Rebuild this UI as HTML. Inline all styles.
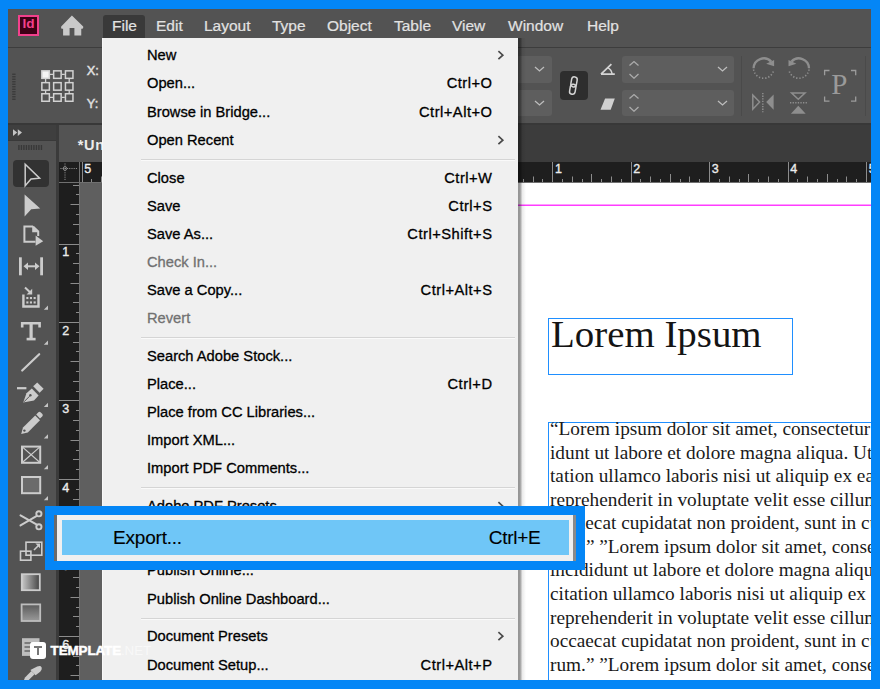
<!DOCTYPE html>
<html><head><meta charset="utf-8"><style>
html,body{margin:0;padding:0;}
body{width:880px;height:689px;position:relative;overflow:hidden;background:#0486f6;font-family:"Liberation Sans",sans-serif;}
</style></head><body>
<div style="position:absolute;left:8px;top:9px;width:863px;height:671px;background:#535353"></div>
<div style="position:absolute;left:8px;top:47px;width:863px;height:1px;background:#3d3d3d"></div>
<div style="position:absolute;left:18px;top:15px;width:17px;height:16.5px;border:2px solid #f2408c;background:#3d0016;"></div>
<div style="position:absolute;left:22.6px;top:17.29px;font:13.6px/13.6px 'Liberation Sans', sans-serif;color:#f2408c;white-space:nowrap;font-weight:bold;letter-spacing:-0.2px">Id</div>
<svg style="position:absolute;left:60px;top:14px;" width="25" height="23" viewBox="0 0 25 23"><path d="M11.9 1.4 L1.2 12.4 Q0.6 14.75 2 14.75 L3.1 14.75 V21.6 H9.6 V14 H14.4 V21.6 H21.25 V14.75 H22.4 Q23.6 14.75 23.2 12.6 Z" fill="#c9c9c9"/></svg>
<div style="position:absolute;left:103px;top:15px;width:42px;height:23px;background:#393939;border-radius:3px 3px 0 0"></div>
<div style="position:absolute;left:112px;top:18.48px;font:15.5px/15.5px 'Liberation Sans', sans-serif;color:#e2e2e2;white-space:nowrap;-webkit-text-stroke:0.2px #e2e2e2">File</div>
<div style="position:absolute;left:156px;top:18.48px;font:15.5px/15.5px 'Liberation Sans', sans-serif;color:#e2e2e2;white-space:nowrap;-webkit-text-stroke:0.2px #e2e2e2">Edit</div>
<div style="position:absolute;left:204px;top:18.48px;font:15.5px/15.5px 'Liberation Sans', sans-serif;color:#e2e2e2;white-space:nowrap;-webkit-text-stroke:0.2px #e2e2e2">Layout</div>
<div style="position:absolute;left:272px;top:18.48px;font:15.5px/15.5px 'Liberation Sans', sans-serif;color:#e2e2e2;white-space:nowrap;-webkit-text-stroke:0.2px #e2e2e2">Type</div>
<div style="position:absolute;left:327px;top:18.48px;font:15.5px/15.5px 'Liberation Sans', sans-serif;color:#e2e2e2;white-space:nowrap;-webkit-text-stroke:0.2px #e2e2e2">Object</div>
<div style="position:absolute;left:394px;top:18.48px;font:15.5px/15.5px 'Liberation Sans', sans-serif;color:#e2e2e2;white-space:nowrap;-webkit-text-stroke:0.2px #e2e2e2">Table</div>
<div style="position:absolute;left:452px;top:18.48px;font:15.5px/15.5px 'Liberation Sans', sans-serif;color:#e2e2e2;white-space:nowrap;-webkit-text-stroke:0.2px #e2e2e2">View</div>
<div style="position:absolute;left:508px;top:18.48px;font:15.5px/15.5px 'Liberation Sans', sans-serif;color:#e2e2e2;white-space:nowrap;-webkit-text-stroke:0.2px #e2e2e2">Window</div>
<div style="position:absolute;left:587px;top:18.48px;font:15.5px/15.5px 'Liberation Sans', sans-serif;color:#e2e2e2;white-space:nowrap;-webkit-text-stroke:0.2px #e2e2e2">Help</div>
<div style="position:absolute;left:8px;top:123px;width:863px;height:2px;background:#383838"></div>
<svg style="position:absolute;left:0px;top:0px;pointer-events:none" width="880" height="689" viewBox="0 0 880 689"><rect x="12.2" y="73.6" width="3.4" height="1.3" fill="#3a3a3a"/><rect x="12.2" y="76.1" width="3.4" height="1.3" fill="#3a3a3a"/><rect x="12.2" y="78.6" width="3.4" height="1.3" fill="#3a3a3a"/><rect x="12.2" y="81.1" width="3.4" height="1.3" fill="#3a3a3a"/><rect x="12.2" y="83.6" width="3.4" height="1.3" fill="#3a3a3a"/><rect x="12.2" y="86.1" width="3.4" height="1.3" fill="#3a3a3a"/><rect x="12.2" y="88.6" width="3.4" height="1.3" fill="#3a3a3a"/><rect x="12.2" y="91.1" width="3.4" height="1.3" fill="#3a3a3a"/><rect x="12.2" y="93.6" width="3.4" height="1.3" fill="#3a3a3a"/><rect x="12.2" y="96.1" width="3.4" height="1.3" fill="#3a3a3a"/><rect x="12.2" y="98.6" width="3.4" height="1.3" fill="#3a3a3a"/></svg>
<svg style="position:absolute;left:0px;top:0px;pointer-events:none" width="880" height="689" viewBox="0 0 880 689"><rect x="41.85" y="70.85" width="7.5" height="7.5" fill="#f4f4f4" stroke="#d2d2d2" stroke-width="1.5"/><rect x="41.85" y="82.65" width="7.5" height="7.5" fill="none" stroke="#d2d2d2" stroke-width="1.5"/><rect x="41.85" y="93.75" width="7.5" height="7.5" fill="none" stroke="#d2d2d2" stroke-width="1.5"/><rect x="53.65" y="70.85" width="7.5" height="7.5" fill="none" stroke="#d2d2d2" stroke-width="1.5"/><rect x="53.65" y="82.65" width="7.5" height="7.5" fill="none" stroke="#d2d2d2" stroke-width="1.5"/><rect x="53.65" y="93.75" width="7.5" height="7.5" fill="none" stroke="#d2d2d2" stroke-width="1.5"/><rect x="65.45" y="70.85" width="7.5" height="7.5" fill="none" stroke="#d2d2d2" stroke-width="1.5"/><rect x="65.45" y="82.65" width="7.5" height="7.5" fill="none" stroke="#d2d2d2" stroke-width="1.5"/><rect x="65.45" y="93.75" width="7.5" height="7.5" fill="none" stroke="#d2d2d2" stroke-width="1.5"/><path d="M50 74.3H53M61.8 74.3H64.8M50 97.3H53M61.8 97.3H64.8M45.6 78.4V82M45.6 90.2V93M69.2 78.4V82M69.2 90.2V93" stroke="#d2d2d2" stroke-width="1.3"/></svg>
<div style="position:absolute;left:86.8px;top:65.36px;font:12.8px/12.8px 'Liberation Sans', sans-serif;color:#e0e0e0;white-space:nowrap;-webkit-text-stroke:0.45px #e0e0e0">X:</div>
<div style="position:absolute;left:86.8px;top:98.36px;font:12.8px/12.8px 'Liberation Sans', sans-serif;color:#e0e0e0;white-space:nowrap;-webkit-text-stroke:0.45px #e0e0e0">Y:</div>
<div style="position:absolute;left:505px;top:56px;width:47px;height:27px;background:#5e5e5e;border-radius:3px"></div>
<div style="position:absolute;left:505px;top:90px;width:47px;height:26px;background:#5e5e5e;border-radius:3px"></div>
<svg style="position:absolute;left:534px;top:66px;" width="11" height="7" viewBox="0 0 11 7"><path d="M1 1 L5.5 5 L10 1" fill="none" stroke="#bdbdbd" stroke-width="1.3"/></svg>
<svg style="position:absolute;left:534px;top:100px;" width="11" height="7" viewBox="0 0 11 7"><path d="M1 1 L5.5 5 L10 1" fill="none" stroke="#bdbdbd" stroke-width="1.3"/></svg>
<div style="position:absolute;left:560px;top:71px;width:28px;height:29px;background:#2e2e2e;border-radius:4px"></div>
<svg style="position:absolute;left:0px;top:0px;pointer-events:none" width="880" height="689" viewBox="0 0 880 689"><g transform="rotate(10 573.4 85.5)"><rect x="570.6" y="76.8" width="5.6" height="10.2" rx="2.8" fill="none" stroke="#d4d4d4" stroke-width="1.5"/><rect x="570.6" y="84.2" width="5.6" height="10.2" rx="2.8" fill="none" stroke="#d4d4d4" stroke-width="1.5"/></g></svg>
<svg style="position:absolute;left:0px;top:0px;pointer-events:none" width="880" height="689" viewBox="0 0 880 689"><path d="M601 74.2 H614.8 M601 74.2 L611.4 64.2" fill="none" stroke="#d4d4d4" stroke-width="1.7"/><path d="M607.8 67.6 Q611.8 70 612 74" fill="none" stroke="#d4d4d4" stroke-width="1.5"/><path d="M605.1 98.5 H614.8 L610.7 109.7 H600.5 Z" fill="#d0d0d0"/></svg>
<div style="position:absolute;left:622px;top:56px;width:112px;height:27px;background:#5e5e5e;border-radius:3px"></div>
<div style="position:absolute;left:622px;top:90px;width:112px;height:26px;background:#5e5e5e;border-radius:3px"></div>
<svg style="position:absolute;left:628.6px;top:60.6px;" width="10" height="18" viewBox="0 0 10 18"><path d="M0.5 4.6 L5 0.6 L9.5 4.6 M0.5 13 L5 17.2 L9.5 13" fill="none" stroke="#ababab" stroke-width="1.3"/></svg>
<svg style="position:absolute;left:628.6px;top:93.9px;" width="10" height="18" viewBox="0 0 10 18"><path d="M0.5 4.6 L5 0.6 L9.5 4.6 M0.5 13 L5 17.2 L9.5 13" fill="none" stroke="#ababab" stroke-width="1.3"/></svg>
<svg style="position:absolute;left:717px;top:66px;" width="11" height="7" viewBox="0 0 11 7"><path d="M1 1 L5.5 5 L10 1" fill="none" stroke="#bdbdbd" stroke-width="1.3"/></svg>
<svg style="position:absolute;left:717px;top:100px;" width="11" height="7" viewBox="0 0 11 7"><path d="M1 1 L5.5 5 L10 1" fill="none" stroke="#bdbdbd" stroke-width="1.3"/></svg>
<div style="position:absolute;left:741px;top:56px;width:1px;height:60px;background:#4a4a4a"></div>
<svg style="position:absolute;left:745px;top:52px;" width="70" height="68" viewBox="0 0 70 68"><path d="M0 0" /><path d="M8.6 16.3 A10.2 10.2 0 0 1 26.2 9.6" fill="none" stroke="#8e8e8e" stroke-width="2.3"/><path d="M8.6 17.5 A10.2 10.2 0 0 0 28.6 18.5" fill="none" stroke="#8e8e8e" stroke-width="1.6" stroke-dasharray="1.3 1.9"/><path d="M21.2 11.8 L29.1 7.9 L29.1 14.3 Z" fill="#8e8e8e"/><g transform="translate(72.6,0) scale(-1,1)"><path d="M0 0" /><path d="M8.6 16.3 A10.2 10.2 0 0 1 26.2 9.6" fill="none" stroke="#8e8e8e" stroke-width="2.3"/><path d="M8.6 17.5 A10.2 10.2 0 0 0 28.6 18.5" fill="none" stroke="#8e8e8e" stroke-width="1.6" stroke-dasharray="1.3 1.9"/><path d="M21.2 11.8 L29.1 7.9 L29.1 14.3 Z" fill="#8e8e8e"/></g></svg>
<svg style="position:absolute;left:0px;top:0px;pointer-events:none" width="880" height="689" viewBox="0 0 880 689"><path d="M752.8 95 L759.6 102.1 L752.8 109.2 Z" fill="none" stroke="#8e8e8e" stroke-width="1.5"/><path d="M773.6 94.4 L766.2 102.1 L773.6 109.8 Z" fill="#8e8e8e"/><path d="M762.8 93 V112.2" stroke="#8e8e8e" stroke-width="1.5" stroke-dasharray="1.3 1.3"/><path d="M791.6 93 L805 93 L798.3 99.2 Z" fill="none" stroke="#8e8e8e" stroke-width="1.5"/><path d="M790.9 113.7 L805.7 113.7 L798.3 105.8 Z" fill="#8e8e8e"/><path d="M790 102.8 H808" stroke="#8e8e8e" stroke-width="1.5" stroke-dasharray="1.3 1.3"/></svg>
<svg style="position:absolute;left:0px;top:0px;pointer-events:none" width="880" height="689" viewBox="0 0 880 689"><path d="M824.6 75.2 V70.5 H829.5 M851 70.5 H855.7 V75.2 M855.7 96.4 V101.1 H851 M829.5 101.1 H824.6 V96.4" fill="none" stroke="#9c9c9c" stroke-width="1.3"/></svg>
<div style="position:absolute;left:831.2px;top:69.91px;font:29px/29px 'Liberation Serif', serif;color:#9a9a9a;white-space:nowrap;">P</div>
<div style="position:absolute;left:865px;top:56px;width:1px;height:60px;background:#4a4a4a"></div>
<div style="position:absolute;left:56px;top:125px;width:815px;height:37px;background:#3c3c3c"></div>
<div style="position:absolute;left:59px;top:125px;width:43px;height:37px;background:#535353"></div>
<div style="position:absolute;left:77.8px;top:137.74px;font:14.6px/14.6px 'Liberation Sans', sans-serif;color:#ececec;white-space:nowrap;font-weight:bold;letter-spacing:0.6px">*Un</div>
<div style="position:absolute;left:8px;top:125px;width:48px;height:15px;background:#3f3f3f"></div>
<svg style="position:absolute;left:12px;top:128px;" width="12" height="9" viewBox="0 0 12 9"><path d="M1 1.2 L5.2 4.6 L1 8Z M5.8 1.2 L10 4.6 L5.8 8Z" fill="#c4c4c4"/></svg>
<div style="position:absolute;left:8px;top:140px;width:48px;height:1px;background:#393939"></div>
<svg style="position:absolute;left:0px;top:0px;pointer-events:none" width="880" height="689" viewBox="0 0 880 689"><rect x="18.2" y="145" width="1.4" height="5" fill="#383838"/><rect x="20.7" y="145" width="1.4" height="5" fill="#383838"/><rect x="23.2" y="145" width="1.4" height="5" fill="#383838"/><rect x="25.7" y="145" width="1.4" height="5" fill="#383838"/><rect x="28.2" y="145" width="1.4" height="5" fill="#383838"/><rect x="30.7" y="145" width="1.4" height="5" fill="#383838"/><rect x="33.2" y="145" width="1.4" height="5" fill="#383838"/><rect x="35.7" y="145" width="1.4" height="5" fill="#383838"/><rect x="38.2" y="145" width="1.4" height="5" fill="#383838"/><rect x="40.7" y="145" width="1.4" height="5" fill="#383838"/></svg>
<div style="position:absolute;left:56px;top:125px;width:3px;height:555px;background:#3b3b3b"></div>
<div style="position:absolute;left:59px;top:162px;width:812px;height:20px;background:#1e1e1e"></div>
<div style="position:absolute;left:59px;top:182px;width:20px;height:498px;background:#1e1e1e"></div>
<div style="position:absolute;left:59px;top:182px;width:812px;height:1px;background:#707070"></div>
<div style="position:absolute;left:79px;top:162px;width:1px;height:518px;background:#707070"></div>
<div style="position:absolute;left:80px;top:183px;width:22px;height:497px;background:#5f5f5f"></div>
<div style="position:absolute;left:102px;top:183px;width:769px;height:497px;background:#ffffff"></div>
<svg style="position:absolute;left:0px;top:0px;pointer-events:none" width="880" height="689" viewBox="0 0 880 689"><path d="M82.5 162V182" stroke="#8c8c8c" stroke-width="1"/><path d="M91.5 179V182" stroke="#8c8c8c" stroke-width="1"/><path d="M101.5 176.5V182" stroke="#8c8c8c" stroke-width="1"/><path d="M111.5 179V182" stroke="#8c8c8c" stroke-width="1"/><path d="M121.5 174V182" stroke="#8c8c8c" stroke-width="1"/><path d="M131.5 179V182" stroke="#8c8c8c" stroke-width="1"/><path d="M140.5 176.5V182" stroke="#8c8c8c" stroke-width="1"/><path d="M150.5 179V182" stroke="#8c8c8c" stroke-width="1"/><path d="M160.5 162V182" stroke="#8c8c8c" stroke-width="1"/><path d="M170.5 179V182" stroke="#8c8c8c" stroke-width="1"/><path d="M180.5 176.5V182" stroke="#8c8c8c" stroke-width="1"/><path d="M189.5 179V182" stroke="#8c8c8c" stroke-width="1"/><path d="M199.5 174V182" stroke="#8c8c8c" stroke-width="1"/><path d="M209.5 179V182" stroke="#8c8c8c" stroke-width="1"/><path d="M219.5 176.5V182" stroke="#8c8c8c" stroke-width="1"/><path d="M229.5 179V182" stroke="#8c8c8c" stroke-width="1"/><path d="M238.5 162V182" stroke="#8c8c8c" stroke-width="1"/><path d="M248.5 179V182" stroke="#8c8c8c" stroke-width="1"/><path d="M258.5 176.5V182" stroke="#8c8c8c" stroke-width="1"/><path d="M268.5 179V182" stroke="#8c8c8c" stroke-width="1"/><path d="M278.5 174V182" stroke="#8c8c8c" stroke-width="1"/><path d="M287.5 179V182" stroke="#8c8c8c" stroke-width="1"/><path d="M297.5 176.5V182" stroke="#8c8c8c" stroke-width="1"/><path d="M307.5 179V182" stroke="#8c8c8c" stroke-width="1"/><path d="M317.5 162V182" stroke="#8c8c8c" stroke-width="1"/><path d="M327.5 179V182" stroke="#8c8c8c" stroke-width="1"/><path d="M336.5 176.5V182" stroke="#8c8c8c" stroke-width="1"/><path d="M346.5 179V182" stroke="#8c8c8c" stroke-width="1"/><path d="M356.5 174V182" stroke="#8c8c8c" stroke-width="1"/><path d="M366.5 179V182" stroke="#8c8c8c" stroke-width="1"/><path d="M376.5 176.5V182" stroke="#8c8c8c" stroke-width="1"/><path d="M385.5 179V182" stroke="#8c8c8c" stroke-width="1"/><path d="M395.5 162V182" stroke="#8c8c8c" stroke-width="1"/><path d="M405.5 179V182" stroke="#8c8c8c" stroke-width="1"/><path d="M415.5 176.5V182" stroke="#8c8c8c" stroke-width="1"/><path d="M425.5 179V182" stroke="#8c8c8c" stroke-width="1"/><path d="M435.5 174V182" stroke="#8c8c8c" stroke-width="1"/><path d="M444.5 179V182" stroke="#8c8c8c" stroke-width="1"/><path d="M454.5 176.5V182" stroke="#8c8c8c" stroke-width="1"/><path d="M464.5 179V182" stroke="#8c8c8c" stroke-width="1"/><path d="M474.5 162V182" stroke="#8c8c8c" stroke-width="1"/><path d="M484.5 179V182" stroke="#8c8c8c" stroke-width="1"/><path d="M493.5 176.5V182" stroke="#8c8c8c" stroke-width="1"/><path d="M503.5 179V182" stroke="#8c8c8c" stroke-width="1"/><path d="M513.5 174V182" stroke="#8c8c8c" stroke-width="1"/><path d="M523.5 179V182" stroke="#8c8c8c" stroke-width="1"/><path d="M533.5 176.5V182" stroke="#8c8c8c" stroke-width="1"/><path d="M542.5 179V182" stroke="#8c8c8c" stroke-width="1"/><path d="M552.5 162V182" stroke="#8c8c8c" stroke-width="1"/><path d="M562.5 179V182" stroke="#8c8c8c" stroke-width="1"/><path d="M572.5 176.5V182" stroke="#8c8c8c" stroke-width="1"/><path d="M582.5 179V182" stroke="#8c8c8c" stroke-width="1"/><path d="M591.5 174V182" stroke="#8c8c8c" stroke-width="1"/><path d="M601.5 179V182" stroke="#8c8c8c" stroke-width="1"/><path d="M611.5 176.5V182" stroke="#8c8c8c" stroke-width="1"/><path d="M621.5 179V182" stroke="#8c8c8c" stroke-width="1"/><path d="M631.5 162V182" stroke="#8c8c8c" stroke-width="1"/><path d="M640.5 179V182" stroke="#8c8c8c" stroke-width="1"/><path d="M650.5 176.5V182" stroke="#8c8c8c" stroke-width="1"/><path d="M660.5 179V182" stroke="#8c8c8c" stroke-width="1"/><path d="M670.5 174V182" stroke="#8c8c8c" stroke-width="1"/><path d="M680.5 179V182" stroke="#8c8c8c" stroke-width="1"/><path d="M689.5 176.5V182" stroke="#8c8c8c" stroke-width="1"/><path d="M699.5 179V182" stroke="#8c8c8c" stroke-width="1"/><path d="M709.5 162V182" stroke="#8c8c8c" stroke-width="1"/><path d="M719.5 179V182" stroke="#8c8c8c" stroke-width="1"/><path d="M729.5 176.5V182" stroke="#8c8c8c" stroke-width="1"/><path d="M739.5 179V182" stroke="#8c8c8c" stroke-width="1"/><path d="M748.5 174V182" stroke="#8c8c8c" stroke-width="1"/><path d="M758.5 179V182" stroke="#8c8c8c" stroke-width="1"/><path d="M768.5 176.5V182" stroke="#8c8c8c" stroke-width="1"/><path d="M778.5 179V182" stroke="#8c8c8c" stroke-width="1"/><path d="M788.5 162V182" stroke="#8c8c8c" stroke-width="1"/><path d="M797.5 179V182" stroke="#8c8c8c" stroke-width="1"/><path d="M807.5 176.5V182" stroke="#8c8c8c" stroke-width="1"/><path d="M817.5 179V182" stroke="#8c8c8c" stroke-width="1"/><path d="M827.5 174V182" stroke="#8c8c8c" stroke-width="1"/><path d="M837.5 179V182" stroke="#8c8c8c" stroke-width="1"/><path d="M846.5 176.5V182" stroke="#8c8c8c" stroke-width="1"/><path d="M856.5 179V182" stroke="#8c8c8c" stroke-width="1"/><path d="M866.5 162V182" stroke="#8c8c8c" stroke-width="1"/></svg>
<div style="position:absolute;left:84.20000000000006px;top:163.42px;font:12.5px/12.5px 'Liberation Sans', sans-serif;color:#ececec;white-space:nowrap;-webkit-text-stroke:0.35px #ececec">5</div>
<div style="position:absolute;left:554.9000000000001px;top:163.42px;font:12.5px/12.5px 'Liberation Sans', sans-serif;color:#ececec;white-space:nowrap;-webkit-text-stroke:0.35px #ececec">1</div>
<div style="position:absolute;left:633.3500000000001px;top:163.42px;font:12.5px/12.5px 'Liberation Sans', sans-serif;color:#ececec;white-space:nowrap;-webkit-text-stroke:0.35px #ececec">2</div>
<div style="position:absolute;left:711.8000000000002px;top:163.42px;font:12.5px/12.5px 'Liberation Sans', sans-serif;color:#ececec;white-space:nowrap;-webkit-text-stroke:0.35px #ececec">3</div>
<div style="position:absolute;left:790.2500000000001px;top:163.42px;font:12.5px/12.5px 'Liberation Sans', sans-serif;color:#ececec;white-space:nowrap;-webkit-text-stroke:0.35px #ececec">4</div>
<div style="position:absolute;left:868.7px;top:163.42px;font:12.5px/12.5px 'Liberation Sans', sans-serif;color:#ececec;white-space:nowrap;-webkit-text-stroke:0.35px #ececec">5</div>
<svg style="position:absolute;left:0px;top:0px;pointer-events:none" width="880" height="689" viewBox="0 0 880 689"><path d="M73 185.5H79" stroke="#8c8c8c" stroke-width="1"/><path d="M76 194.5H79" stroke="#8c8c8c" stroke-width="1"/><path d="M70.5 204.5H79" stroke="#8c8c8c" stroke-width="1"/><path d="M76 214.5H79" stroke="#8c8c8c" stroke-width="1"/><path d="M73 224.5H79" stroke="#8c8c8c" stroke-width="1"/><path d="M76 234.5H79" stroke="#8c8c8c" stroke-width="1"/><path d="M59 244.5H79" stroke="#8c8c8c" stroke-width="1"/><path d="M76 253.5H79" stroke="#8c8c8c" stroke-width="1"/><path d="M73 263.5H79" stroke="#8c8c8c" stroke-width="1"/><path d="M76 273.5H79" stroke="#8c8c8c" stroke-width="1"/><path d="M70.5 283.5H79" stroke="#8c8c8c" stroke-width="1"/><path d="M76 293.5H79" stroke="#8c8c8c" stroke-width="1"/><path d="M73 302.5H79" stroke="#8c8c8c" stroke-width="1"/><path d="M76 312.5H79" stroke="#8c8c8c" stroke-width="1"/><path d="M59 322.5H79" stroke="#8c8c8c" stroke-width="1"/><path d="M76 332.5H79" stroke="#8c8c8c" stroke-width="1"/><path d="M73 342.5H79" stroke="#8c8c8c" stroke-width="1"/><path d="M76 351.5H79" stroke="#8c8c8c" stroke-width="1"/><path d="M70.5 361.5H79" stroke="#8c8c8c" stroke-width="1"/><path d="M76 371.5H79" stroke="#8c8c8c" stroke-width="1"/><path d="M73 381.5H79" stroke="#8c8c8c" stroke-width="1"/><path d="M76 391.5H79" stroke="#8c8c8c" stroke-width="1"/><path d="M59 400.5H79" stroke="#8c8c8c" stroke-width="1"/><path d="M76 410.5H79" stroke="#8c8c8c" stroke-width="1"/><path d="M73 420.5H79" stroke="#8c8c8c" stroke-width="1"/><path d="M76 430.5H79" stroke="#8c8c8c" stroke-width="1"/><path d="M70.5 440.5H79" stroke="#8c8c8c" stroke-width="1"/><path d="M76 450.5H79" stroke="#8c8c8c" stroke-width="1"/><path d="M73 459.5H79" stroke="#8c8c8c" stroke-width="1"/><path d="M76 469.5H79" stroke="#8c8c8c" stroke-width="1"/><path d="M59 479.5H79" stroke="#8c8c8c" stroke-width="1"/><path d="M76 489.5H79" stroke="#8c8c8c" stroke-width="1"/><path d="M73 499.5H79" stroke="#8c8c8c" stroke-width="1"/><path d="M76 508.5H79" stroke="#8c8c8c" stroke-width="1"/><path d="M70.5 518.5H79" stroke="#8c8c8c" stroke-width="1"/><path d="M76 528.5H79" stroke="#8c8c8c" stroke-width="1"/><path d="M73 538.5H79" stroke="#8c8c8c" stroke-width="1"/><path d="M76 548.5H79" stroke="#8c8c8c" stroke-width="1"/><path d="M59 558.5H79" stroke="#8c8c8c" stroke-width="1"/><path d="M76 567.5H79" stroke="#8c8c8c" stroke-width="1"/><path d="M73 577.5H79" stroke="#8c8c8c" stroke-width="1"/><path d="M76 587.5H79" stroke="#8c8c8c" stroke-width="1"/><path d="M70.5 597.5H79" stroke="#8c8c8c" stroke-width="1"/><path d="M76 607.5H79" stroke="#8c8c8c" stroke-width="1"/><path d="M73 616.5H79" stroke="#8c8c8c" stroke-width="1"/><path d="M76 626.5H79" stroke="#8c8c8c" stroke-width="1"/><path d="M59 636.5H79" stroke="#8c8c8c" stroke-width="1"/><path d="M76 646.5H79" stroke="#8c8c8c" stroke-width="1"/><path d="M73 656.5H79" stroke="#8c8c8c" stroke-width="1"/><path d="M76 665.5H79" stroke="#8c8c8c" stroke-width="1"/><path d="M70.5 675.5H79" stroke="#8c8c8c" stroke-width="1"/></svg>
<div style="position:absolute;left:62.2px;top:246.42px;font:12.5px/12.5px 'Liberation Sans', sans-serif;color:#ececec;white-space:nowrap;-webkit-text-stroke:0.35px #ececec">1</div>
<div style="position:absolute;left:62.2px;top:324.92px;font:12.5px/12.5px 'Liberation Sans', sans-serif;color:#ececec;white-space:nowrap;-webkit-text-stroke:0.35px #ececec">2</div>
<div style="position:absolute;left:62.2px;top:403.42px;font:12.5px/12.5px 'Liberation Sans', sans-serif;color:#ececec;white-space:nowrap;-webkit-text-stroke:0.35px #ececec">3</div>
<div style="position:absolute;left:62.2px;top:481.92px;font:12.5px/12.5px 'Liberation Sans', sans-serif;color:#ececec;white-space:nowrap;-webkit-text-stroke:0.35px #ececec">4</div>
<div style="position:absolute;left:62.2px;top:560.42px;font:12.5px/12.5px 'Liberation Sans', sans-serif;color:#ececec;white-space:nowrap;-webkit-text-stroke:0.35px #ececec">5</div>
<div style="position:absolute;left:62.2px;top:638.92px;font:12.5px/12.5px 'Liberation Sans', sans-serif;color:#ececec;white-space:nowrap;-webkit-text-stroke:0.35px #ececec">6</div>
<svg style="position:absolute;left:59px;top:162px;" width="20" height="20" viewBox="0 0 20 20"><path d="M1.5 6.5H18M6 1.5V18" stroke="#9a9a9a" stroke-width="1" stroke-dasharray="1 1.2"/><circle cx="6" cy="6.5" r="1.8" fill="none" stroke="#9a9a9a" stroke-width="0.8"/></svg>
<svg style="position:absolute;left:0px;top:0px;pointer-events:none" width="880" height="689" viewBox="0 0 880 689"><path d="M102 205.2H871" stroke="#ff3cff" stroke-width="1.5"/></svg>
<div style="position:absolute;left:548px;top:318px;width:245px;height:57px;border:1px solid #1f8fff;box-sizing:border-box"></div>
<div style="position:absolute;left:551px;top:314.62px;font:38.9px/38.9px 'Liberation Serif', serif;color:#141414;white-space:nowrap;">Lorem Ipsum</div>
<div style="position:absolute;left:548px;top:422px;width:332px;height:278px;border:1px solid #1f8fff;box-sizing:border-box"></div>
<div style="position:absolute;left:550px;top:419.14px;font:19.3px/19.3px 'Liberation Serif', serif;color:#1a1a1a;white-space:nowrap;">“Lorem ipsum dolor sit amet, consectetur adipiscing</div>
<div style="position:absolute;left:550px;top:442.69px;font:19.3px/19.3px 'Liberation Serif', serif;color:#1a1a1a;white-space:nowrap;">idunt ut labore et dolore magna aliqua. Ut enim</div>
<div style="position:absolute;left:550px;top:466.24px;font:19.3px/19.3px 'Liberation Serif', serif;color:#1a1a1a;white-space:nowrap;">tation ullamco laboris nisi ut aliquip ex ea commodo</div>
<div style="position:absolute;left:550px;top:489.79px;font:19.3px/19.3px 'Liberation Serif', serif;color:#1a1a1a;white-space:nowrap;">reprehenderit in voluptate velit esse cillum dolore</div>
<div style="position:absolute;left:550px;top:513.34px;font:19.3px/19.3px 'Liberation Serif', serif;color:#1a1a1a;white-space:nowrap;">occaecat cupidatat non proident, sunt in culpa</div>
<div style="position:absolute;left:550px;top:536.89px;font:19.3px/19.3px 'Liberation Serif', serif;color:#1a1a1a;white-space:nowrap;">rum.” ”Lorem ipsum dolor sit amet, consectetur</div>
<div style="position:absolute;left:550px;top:560.44px;font:19.3px/19.3px 'Liberation Serif', serif;color:#1a1a1a;white-space:nowrap;">incididunt ut labore et dolore magna aliqua. Ut</div>
<div style="position:absolute;left:550px;top:583.99px;font:19.3px/19.3px 'Liberation Serif', serif;color:#1a1a1a;white-space:nowrap;">citation ullamco laboris nisi ut aliquip ex ea</div>
<div style="position:absolute;left:550px;top:607.54px;font:19.3px/19.3px 'Liberation Serif', serif;color:#1a1a1a;white-space:nowrap;">reprehenderit in voluptate velit esse cillum dolore</div>
<div style="position:absolute;left:550px;top:631.09px;font:19.3px/19.3px 'Liberation Serif', serif;color:#1a1a1a;white-space:nowrap;">occaecat cupidatat non proident, sunt in culpa</div>
<div style="position:absolute;left:550px;top:654.64px;font:19.3px/19.3px 'Liberation Serif', serif;color:#1a1a1a;white-space:nowrap;">rum.” ”Lorem ipsum dolor sit amet, consectetur</div>
<div style="position:absolute;left:13px;top:160px;width:36px;height:27px;background:#323232;border-radius:4px"></div>
<svg style="position:absolute;left:0px;top:0px;pointer-events:none" width="880" height="689" viewBox="0 0 880 689"><path d="M25.2 164.2 L39.6 178.2 L31 179 L25.2 185.8 Z" fill="none" stroke="#cccccc" stroke-width="1.5" stroke-linejoin="miter"/><path d="M24.6 194.6 L40.2 208.6 L31.2 209.2 L24.6 216.6 Z" fill="#cccccc"/><path d="M33 226.5 H24.4 V241.8 H35.5 M33 226.5 L38.2 231.5 V236" fill="none" stroke="#cccccc" stroke-width="2"/><path d="M32.2 226 V232.3 H38.7 Z" fill="#cccccc"/><path d="M35.6 235.6 L43.2 241.2 L35.6 245.8 Z" fill="#cccccc"/><rect x="19" y="257.3" width="2.8" height="18" fill="#cccccc"/><rect x="40.2" y="257.3" width="2.8" height="18" fill="#cccccc"/><path d="M26 266.3 H37" stroke="#cccccc" stroke-width="2"/><path d="M23.5 266.3 L28 262.6 V270 Z M39.5 266.3 L35 262.6 V270 Z" fill="#cccccc"/><path d="M23.4 294.6 V306.5 H38.5 V294.6" fill="none" stroke="#cccccc" stroke-width="2.4"/><rect x="26.3" y="297" width="2.1" height="2.1" fill="#cccccc"/><rect x="26.3" y="301.4" width="2.1" height="2.1" fill="#cccccc"/><rect x="29.9" y="297" width="2.1" height="2.1" fill="#cccccc"/><rect x="29.9" y="301.4" width="2.1" height="2.1" fill="#cccccc"/><rect x="33.6" y="297" width="2.1" height="2.1" fill="#cccccc"/><rect x="33.6" y="301.4" width="2.1" height="2.1" fill="#cccccc"/><path d="M25 287.6 L30.6 292.8" stroke="#cccccc" stroke-width="2"/><path d="M32.2 294.4 L32.2 288.8 L26.6 294.4 Z" fill="#cccccc"/><path d="M48.0 305.6 V309.8 H43.8 Z" fill="#c4c4c4"/><path d="M22.2 327.5 V323.2 H39.6 V327.5" fill="none" stroke="#cccccc" stroke-width="2.6"/><rect x="29.5" y="323.5" width="3.2" height="15.6" fill="#cccccc"/><rect x="26.6" y="337.8" width="9" height="2.6" fill="#cccccc"/><path d="M48.0 340.5 V344.7 H43.8 Z" fill="#c4c4c4"/><path d="M22.2 370.5 L39.2 354.2" stroke="#cccccc" stroke-width="2.2" stroke-linecap="round"/><path d="M17 388.2 H26.4" stroke="#cccccc" stroke-width="2.2"/><path d="M23.2 402.6 L26.5 393.2 L31.8 388.6 L38.6 395.4 L34 400.6 Z" fill="#cccccc"/><path d="M33.2 386.2 L37.2 382.4 L43.6 388.8 L39.6 392.8 Z" fill="#cccccc"/><path d="M24 401.8 L29.6 396.2" stroke="#535353" stroke-width="1"/><circle cx="30.4" cy="395.3" r="1.2" fill="#535353"/><path d="M48.0 402.8 V407.0 H43.8 Z" fill="#c4c4c4"/><path d="M21.2 434 L23 427.6 L35.2 415.4 L40 420.2 L27.8 432.4 Z" fill="#cccccc"/><path d="M36.2 414.4 L38.4 412.2 Q39.6 411.2 40.8 412.4 L42.4 414 Q43.4 415.2 42.2 416.4 L40 418.6 Z" fill="#cccccc"/><circle cx="24.4" cy="430.6" r="1.2" fill="#535353"/><path d="M48.0 434.2 V438.4 H43.8 Z" fill="#c4c4c4"/><rect x="22" y="446.6" width="18.2" height="16.2" fill="none" stroke="#cccccc" stroke-width="2"/><path d="M22 446.6 L40.2 462.8 M40.2 446.6 L22 462.8" stroke="#cccccc" stroke-width="1.2"/><path d="M48.0 465 V469.2 H43.8 Z" fill="#c4c4c4"/><rect x="22" y="477" width="18.2" height="16.2" fill="#6b6b6b" stroke="#cccccc" stroke-width="2"/><path d="M48.0 496 V500.2 H43.8 Z" fill="#c4c4c4"/><circle cx="38.9" cy="513.8" r="2.6" fill="none" stroke="#cccccc" stroke-width="1.9"/><circle cx="38.9" cy="526.8" r="2.6" fill="none" stroke="#cccccc" stroke-width="1.9"/><path d="M20.5 515.4 L36.4 524.4 M20.5 525.4 L36.4 516.2" stroke="#cccccc" stroke-width="2" stroke-linecap="round"/><rect x="20.5" y="551.2" width="10.4" height="9" fill="none" stroke="#cccccc" stroke-width="1.6"/><rect x="26" y="542.2" width="15.8" height="13" fill="none" stroke="#cccccc" stroke-width="1.6"/><path d="M34 550 L39 545" stroke="#cccccc" stroke-width="1.6"/><path d="M40 543.6 V548.2 L35.4 543.6 Z" fill="#cccccc"/><defs><linearGradient id="gs" x1="0" x2="1" y1="0" y2="0"><stop offset="0" stop-color="#c8c8c8"/><stop offset="1" stop-color="#444"/></linearGradient><linearGradient id="gf" x1="0" x2="0" y1="0" y2="1"><stop offset="0" stop-color="#5a5a5a"/><stop offset="1" stop-color="#9a9a9a"/></linearGradient></defs><rect x="21.8" y="574.2" width="18" height="16" fill="url(#gs)" stroke="#cccccc" stroke-width="1.8"/><rect x="21.6" y="604.4" width="18.6" height="16.6" fill="url(#gf)" stroke="#bdbdbd" stroke-width="1.8"/><rect x="22" y="638.2" width="17.5" height="17.7" fill="#bdbdbd"/><path d="M24.5 643H31M24.5 647H31M24.5 651H31" stroke="#666" stroke-width="1.4"/><path d="M23.6 681 L25 677.4 L31.4 671 L34.6 674.2 L28.2 680.6 Z" fill="#cccccc"/><path d="M30.4 670 L37.2 666.6 Q40.6 665.2 41.6 667.4 Q42.4 669.6 39.2 672.6 L35.6 675.2 Z" fill="#cccccc"/></svg>
<div style="position:absolute;left:518px;top:38px;width:8px;height:642px;background:linear-gradient(90deg,rgba(0,0,0,0.42),rgba(0,0,0,0.40) 25%,rgba(0,0,0,0.08) 55%,rgba(0,0,0,0))"></div>
<div style="position:absolute;left:102px;top:38px;width:416px;height:642px;background:#f0f0f0"></div>
<div style="position:absolute;left:102px;top:38px;width:1px;height:642px;background:#f8f8f8"></div>
<div style="position:absolute;left:147px;top:48.46px;font:14.7px/14.7px 'Liberation Sans', sans-serif;color:#000;white-space:nowrap;-webkit-text-stroke:0.3px currentColor">New</div>
<svg style="position:absolute;left:496px;top:49px;" width="9" height="12" viewBox="0 0 9 12"><path d="M2.4 2.2 L6.8 6.2 L2.4 10.2" fill="none" stroke="#4a4a4a" stroke-width="1.7"/></svg>
<div style="position:absolute;left:147px;top:76.36px;font:14.7px/14.7px 'Liberation Sans', sans-serif;color:#000;white-space:nowrap;-webkit-text-stroke:0.3px currentColor">Open...</div>
<div style="position:absolute;right:387.5px;top:76.36px;font:14.7px/14.7px 'Liberation Sans', sans-serif;color:#000;white-space:nowrap;-webkit-text-stroke:0.3px currentColor;letter-spacing:0.5px">Ctrl+O</div>
<div style="position:absolute;left:147px;top:104.86px;font:14.7px/14.7px 'Liberation Sans', sans-serif;color:#000;white-space:nowrap;-webkit-text-stroke:0.3px currentColor">Browse in Bridge...</div>
<div style="position:absolute;right:387.5px;top:104.86px;font:14.7px/14.7px 'Liberation Sans', sans-serif;color:#000;white-space:nowrap;-webkit-text-stroke:0.3px currentColor;letter-spacing:0.5px">Ctrl+Alt+O</div>
<div style="position:absolute;left:147px;top:133.06px;font:14.7px/14.7px 'Liberation Sans', sans-serif;color:#000;white-space:nowrap;-webkit-text-stroke:0.3px currentColor">Open Recent</div>
<svg style="position:absolute;left:496px;top:134px;" width="9" height="12" viewBox="0 0 9 12"><path d="M2.4 2.2 L6.8 6.2 L2.4 10.2" fill="none" stroke="#4a4a4a" stroke-width="1.7"/></svg>
<div style="position:absolute;left:147px;top:171.06px;font:14.7px/14.7px 'Liberation Sans', sans-serif;color:#000;white-space:nowrap;-webkit-text-stroke:0.3px currentColor">Close</div>
<div style="position:absolute;right:387.5px;top:171.06px;font:14.7px/14.7px 'Liberation Sans', sans-serif;color:#000;white-space:nowrap;-webkit-text-stroke:0.3px currentColor;letter-spacing:0.5px">Ctrl+W</div>
<div style="position:absolute;left:147px;top:198.96px;font:14.7px/14.7px 'Liberation Sans', sans-serif;color:#000;white-space:nowrap;-webkit-text-stroke:0.3px currentColor">Save</div>
<div style="position:absolute;right:387.5px;top:198.96px;font:14.7px/14.7px 'Liberation Sans', sans-serif;color:#000;white-space:nowrap;-webkit-text-stroke:0.3px currentColor;letter-spacing:0.5px">Ctrl+S</div>
<div style="position:absolute;left:147px;top:227.16px;font:14.7px/14.7px 'Liberation Sans', sans-serif;color:#000;white-space:nowrap;-webkit-text-stroke:0.3px currentColor">Save As...</div>
<div style="position:absolute;right:387.5px;top:227.16px;font:14.7px/14.7px 'Liberation Sans', sans-serif;color:#000;white-space:nowrap;-webkit-text-stroke:0.3px currentColor;letter-spacing:0.5px">Ctrl+Shift+S</div>
<div style="position:absolute;left:147px;top:255.26px;font:14.7px/14.7px 'Liberation Sans', sans-serif;color:#717171;white-space:nowrap;-webkit-text-stroke:0.3px currentColor">Check In...</div>
<div style="position:absolute;left:147px;top:283.26px;font:14.7px/14.7px 'Liberation Sans', sans-serif;color:#000;white-space:nowrap;-webkit-text-stroke:0.3px currentColor">Save a Copy...</div>
<div style="position:absolute;right:387.5px;top:283.26px;font:14.7px/14.7px 'Liberation Sans', sans-serif;color:#000;white-space:nowrap;-webkit-text-stroke:0.3px currentColor;letter-spacing:0.5px">Ctrl+Alt+S</div>
<div style="position:absolute;left:147px;top:311.36px;font:14.7px/14.7px 'Liberation Sans', sans-serif;color:#717171;white-space:nowrap;-webkit-text-stroke:0.3px currentColor">Revert</div>
<div style="position:absolute;left:147px;top:349.16px;font:14.7px/14.7px 'Liberation Sans', sans-serif;color:#000;white-space:nowrap;-webkit-text-stroke:0.3px currentColor">Search Adobe Stock...</div>
<div style="position:absolute;left:147px;top:377.06px;font:14.7px/14.7px 'Liberation Sans', sans-serif;color:#000;white-space:nowrap;-webkit-text-stroke:0.3px currentColor">Place...</div>
<div style="position:absolute;right:387.5px;top:377.06px;font:14.7px/14.7px 'Liberation Sans', sans-serif;color:#000;white-space:nowrap;-webkit-text-stroke:0.3px currentColor;letter-spacing:0.5px">Ctrl+D</div>
<div style="position:absolute;left:147px;top:404.86px;font:14.7px/14.7px 'Liberation Sans', sans-serif;color:#000;white-space:nowrap;-webkit-text-stroke:0.3px currentColor">Place from CC Libraries...</div>
<div style="position:absolute;left:147px;top:433.26px;font:14.7px/14.7px 'Liberation Sans', sans-serif;color:#000;white-space:nowrap;-webkit-text-stroke:0.3px currentColor">Import XML...</div>
<div style="position:absolute;left:147px;top:460.56px;font:14.7px/14.7px 'Liberation Sans', sans-serif;color:#000;white-space:nowrap;-webkit-text-stroke:0.3px currentColor">Import PDF Comments...</div>
<div style="position:absolute;left:147px;top:499.26px;font:14.7px/14.7px 'Liberation Sans', sans-serif;color:#000;white-space:nowrap;-webkit-text-stroke:0.3px currentColor">Adobe PDF Presets</div>
<svg style="position:absolute;left:496px;top:500px;" width="9" height="12" viewBox="0 0 9 12"><path d="M2.4 2.2 L6.8 6.2 L2.4 10.2" fill="none" stroke="#4a4a4a" stroke-width="1.7"/></svg>
<div style="position:absolute;left:147px;top:563.36px;font:14.7px/14.7px 'Liberation Sans', sans-serif;color:#000;white-space:nowrap;-webkit-text-stroke:0.3px currentColor">Publish Online...</div>
<div style="position:absolute;left:147px;top:591.76px;font:14.7px/14.7px 'Liberation Sans', sans-serif;color:#000;white-space:nowrap;-webkit-text-stroke:0.3px currentColor">Publish Online Dashboard...</div>
<div style="position:absolute;left:147px;top:629.26px;font:14.7px/14.7px 'Liberation Sans', sans-serif;color:#000;white-space:nowrap;-webkit-text-stroke:0.3px currentColor">Document Presets</div>
<svg style="position:absolute;left:496px;top:630px;" width="9" height="12" viewBox="0 0 9 12"><path d="M2.4 2.2 L6.8 6.2 L2.4 10.2" fill="none" stroke="#4a4a4a" stroke-width="1.7"/></svg>
<div style="position:absolute;left:147px;top:657.56px;font:14.7px/14.7px 'Liberation Sans', sans-serif;color:#000;white-space:nowrap;-webkit-text-stroke:0.3px currentColor">Document Setup...</div>
<div style="position:absolute;right:387.5px;top:657.56px;font:14.7px/14.7px 'Liberation Sans', sans-serif;color:#000;white-space:nowrap;-webkit-text-stroke:0.3px currentColor;letter-spacing:0.5px">Ctrl+Alt+P</div>
<div style="position:absolute;left:141px;top:159px;width:374px;height:1px;background:#d5d5d5"></div>
<div style="position:absolute;left:141px;top:160px;width:374px;height:1px;background:#fafafa"></div>
<div style="position:absolute;left:141px;top:337px;width:374px;height:1px;background:#d5d5d5"></div>
<div style="position:absolute;left:141px;top:338px;width:374px;height:1px;background:#fafafa"></div>
<div style="position:absolute;left:141px;top:487px;width:374px;height:1px;background:#d5d5d5"></div>
<div style="position:absolute;left:141px;top:488px;width:374px;height:1px;background:#fafafa"></div>
<div style="position:absolute;left:141px;top:618px;width:374px;height:1px;background:#d5d5d5"></div>
<div style="position:absolute;left:141px;top:619px;width:374px;height:1px;background:#fafafa"></div>
<div style="position:absolute;left:45px;top:506px;width:540px;height:64px;background:#0486f6"></div>
<div style="position:absolute;left:54px;top:515px;width:522px;height:46px;background:#f0f0f0"></div>
<div style="position:absolute;left:54px;top:515px;width:3px;height:46px;background:#6a6a6a"></div>
<div style="position:absolute;left:573px;top:515px;width:3px;height:46px;background:#8a8a8a"></div>
<div style="position:absolute;left:62px;top:520px;width:507px;height:35px;background:#6fc6f7"></div>
<div style="position:absolute;left:113px;top:527.82px;font:19px/19px 'Liberation Sans', sans-serif;color:#000;white-space:nowrap;-webkit-text-stroke:0.12px #000;letter-spacing:-0.2px">Export...</div>
<div style="position:absolute;right:339.70000000000005px;top:527.82px;font:19px/19px 'Liberation Sans', sans-serif;color:#000;white-space:nowrap;-webkit-text-stroke:0.12px #000;letter-spacing:-0.3px">Ctrl+E</div>
<div style="position:absolute;left:30px;top:642px;width:16px;height:17px;background:#fff;border-radius:3px;"></div>
<svg style="position:absolute;left:30px;top:642px;" width="16" height="17" viewBox="0 0 16 17"><path d="M4 5H12M8 5V13" stroke="#777" stroke-width="2"/></svg>
<div style="position:absolute;left:50.6px;top:643.66px;font:13.4px/13.4px 'Liberation Sans', sans-serif;color:#fff;white-space:nowrap;font-weight:bold;letter-spacing:-0.1px"><span style="-webkit-text-stroke:0.5px #fff">TEMPLATE</span><span style="font-weight:normal;opacity:0.55">.NET</span></div>
<div style="position:absolute;left:0px;top:0px;width:880px;height:9px;background:#0486f6"></div>
<div style="position:absolute;left:0px;top:680px;width:880px;height:9px;background:#0486f6"></div>
<div style="position:absolute;left:0px;top:0px;width:8px;height:689px;background:#0486f6"></div>
<div style="position:absolute;left:871px;top:0px;width:9px;height:689px;background:#0486f6"></div>
</body></html>
